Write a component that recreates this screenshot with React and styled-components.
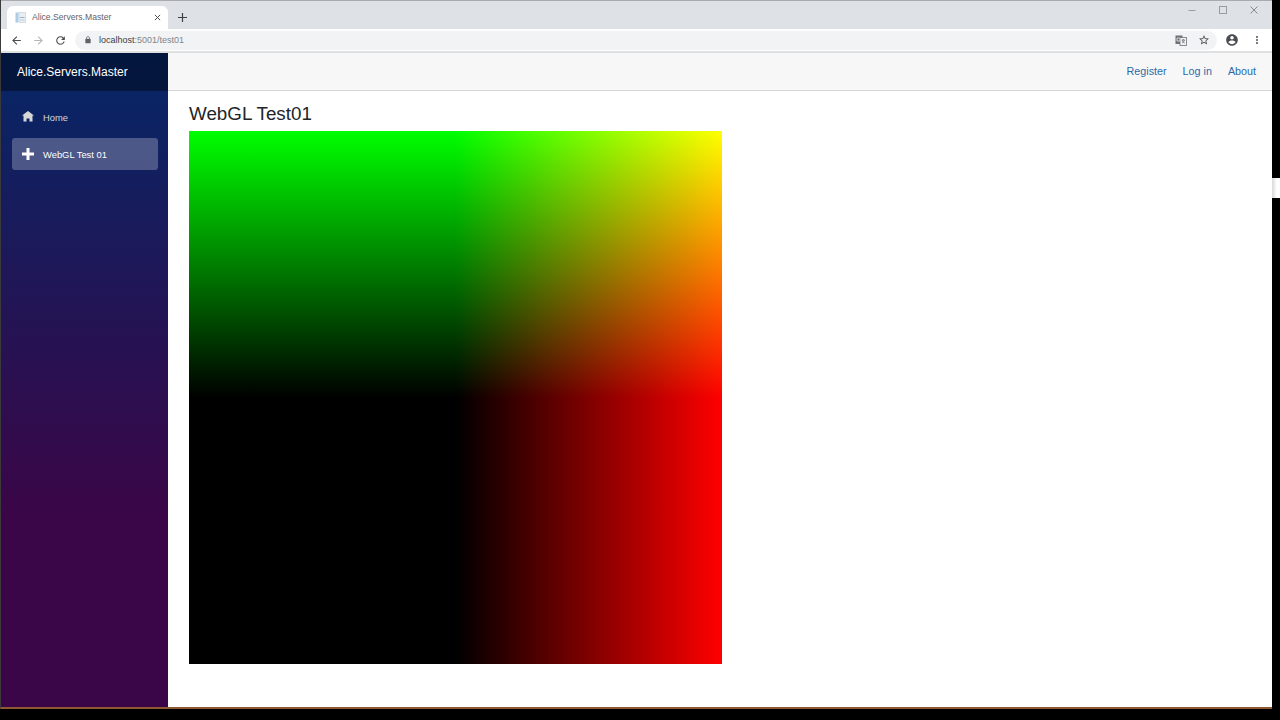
import React from "react";
import styled, { createGlobalStyle } from "styled-components";

const Global = createGlobalStyle`
  html, body { margin: 0; padding: 0; background: #000; }
  * { box-sizing: border-box; }
  body { font-family: "Liberation Sans", Arial, sans-serif; }
`;

const Screen = styled.div`
  width: 1280px; height: 720px; background: #000; display: flex; overflow: hidden;
`;
const Window = styled.div`
  width: 1272px; height: 709px; display: flex; flex-direction: column;
  border-left: 1px solid #3a3a3a; border-bottom: 2px solid #8f5a33; background: #fff;
`;
const Edge = styled.div`
  flex: 1; display: flex; flex-direction: column; padding-top: 178px;
`;
const EdgePatch = styled.div`
  height: 20px; background: linear-gradient(90deg, #d8d8d8, #fff 60%);
`;
const TabStrip = styled.div`
  height: 29px; flex: none; background: #dee1e6; border-top: 1px solid #a9abae;
  display: flex; align-items: flex-end; padding-left: 6px;
`;
const Tab = styled.div`
  width: 161px; height: 23px; background: #fff; border-radius: 6px 6px 0 0;
  display: flex; align-items: center; padding: 0 7px 1px 8px; gap: 6px;
`;
const TabTitle = styled.span`
  flex: 1; font-size: 8.6px; color: #5f6368; white-space: nowrap;
`;
const NewTab = styled.div`
  width: 28px; height: 23px; display: flex; align-items: center; justify-content: center; margin-right: auto;
`;
const WinControls = styled.div`
  align-self: flex-start; display: flex; gap: 21px; padding: 2px 13px 0 0; color: #85888c;
`;
const Toolbar = styled.div`
  height: 22px; flex: none; background: #fff; display: flex; align-items: center; padding: 0 9px 0 9px;
`;
const NavButtons = styled.div`
  display: flex; gap: 9px; align-items: center; margin-right: 8px;
`;
const Omnibox = styled.div`
  width: 1148px; height: 19px; border-radius: 10px; background: #f1f3f4;
  display: flex; align-items: center; padding: 0 7px 0 9px;
`;
const Url = styled.span`
  font-size: 9px; color: #80868b; margin-left: 7px; flex: 1;
`;
const Host = styled.span`color: #3c4043;`;
const OmniIcons = styled.div`display: flex; align-items: center; gap: 11px;`;
const ToolbarEnd = styled.div`
  display: flex; align-items: center; gap: 12px; margin-left: 8px;
`;
const ToolDivider = styled.div`
  height: 2px; flex: none; background: #dfe0e2;
`;
const Main = styled.div`
  flex: 1; display: flex; min-height: 0;
`;
const Sidebar = styled.aside`
  width: 167px; flex: none; display: flex; flex-direction: column;
  background: linear-gradient(180deg, #052767 0%, #3a0647 70%);
`;
const Brand = styled.div`
  height: 38px; flex: none; background: rgba(0, 0, 0, 0.4); color: #fff; font-size: 12px;
  display: flex; align-items: center; padding: 0 0 1px 16px;
`;
const NavList = styled.nav`
  display: flex; flex-direction: column; gap: 5px; padding: 10px 10px 0 11px;
`;
const NavItem = styled.div`
  height: 32px; border-radius: 3px; display: flex; align-items: center; padding-left: 10px; gap: 9px;
  font-size: 9.4px; color: ${p => (p.$active ? "#fff" : "#d7d7d7")};
  background: ${p => (p.$active ? "rgba(255,255,255,0.25)" : "transparent")};
`;
const Page = styled.div`flex: 1; display: flex; flex-direction: column; min-width: 0;`;
const TopBar = styled.header`
  height: 38px; flex: none; background: #f7f7f7; border-bottom: 1px solid #d6d5d5;
  display: flex; justify-content: flex-end; align-items: center; gap: 16px; padding: 0 16px 1px 0;
`;
const TopLink = styled.a`
  font-size: 10.75px; color: #2c6aa8; text-decoration: none;
`;
const Content = styled.main`
  padding: 12px 0 0 21px;
`;
const Title = styled.h1`
  margin: 0 0 6px; font-size: 18.8px; line-height: 22px; font-weight: 400; color: #212529;
`;
const Canvas = styled.div`
  width: 533px; height: 533px;
  background-image: linear-gradient(to right, #000 50%, #f00 100%), linear-gradient(to bottom, #0f0 0%, #000 50%);
  background-blend-mode: screen;
`;

const Mi = ({ d, size = 12, color = "#5f6368" }) => (
  <svg width={size} height={size} viewBox="0 0 24 24" fill={color}><path d={d} /></svg>
);
const Oi = ({ d, size = 12 }) => (
  <svg width={size} height={size} viewBox="0 0 8 8" fill="currentColor" style={{ flex: "none" }}><path d={d} /></svg>
);

const BACK = "M20 11H7.83l5.59-5.59L12 4l-8 8 8 8 1.41-1.41L7.83 13H20v-2z";
const FWD = "M12 4l-1.41 1.41L16.17 11H4v2h12.17l-5.58 5.59L12 20l8-8z";
const RELOAD = "M17.65 6.35A7.958 7.958 0 0 0 12 4c-4.42 0-7.99 3.58-7.99 8s3.57 8 7.99 8c3.73 0 6.84-2.55 7.73-6h-2.08A5.99 5.99 0 0 1 12 18c-3.31 0-6-2.69-6-6s2.69-6 6-6c1.66 0 3.14.69 4.22 1.78L13 11h7V4l-2.35 2.35z";
const LOCK = "M18 8h-1V6c0-2.76-2.24-5-5-5S7 3.24 7 6v2H6c-1.1 0-2 .9-2 2v10c0 1.1.9 2 2 2h12c1.1 0 2-.9 2-2V10c0-1.1-.9-2-2-2zM9 6c0-1.66 1.34-3 3-3s3 1.34 3 3v2H9V6z";
const STAR = "M22 9.24l-7.19-.62L12 2 9.19 8.63 2 9.24l5.46 4.73L5.82 21 12 17.27 18.18 21l-1.63-7.03L22 9.24zM12 15.4l-3.76 2.27 1-4.28-3.32-2.88 4.38-.38L12 6.1l1.71 4.04 4.38.38-3.32 2.88 1 4.28L12 15.4z";
const ACCOUNT = "M12 2C6.48 2 2 6.48 2 12s4.48 10 10 10 10-4.48 10-10S17.52 2 12 2zm0 3c1.66 0 3 1.34 3 3s-1.34 3-3 3-3-1.34-3-3 1.34-3 3-3zm0 14.2c-2.5 0-4.71-1.28-6-3.22.03-1.99 4-3.08 6-3.08 1.99 0 5.97 1.09 6 3.08-1.29 1.94-3.5 3.22-6 3.22z";
const DOTS = "M12 8a2 2 0 1 0 0-4 2 2 0 0 0 0 4zm0 2a2 2 0 1 0 0 4 2 2 0 0 0 0-4zm0 6a2 2 0 1 0 0 4 2 2 0 0 0 0-4z";
const HOME = "M4 0l-4 3h1v4h2v-2h2v2h2v-4.03l1 .03-4-3z";
const PLUS = "M3 0v3h-3v2h3v3h2v-3h3v-2h-3v-3h-2z";

const Favicon = () => (
  <svg width="11" height="11" viewBox="0 0 11 11">
    <rect x="0.5" y="0.5" width="3" height="10" fill="#a9cdea" />
    <rect x="4" y="0.5" width="6.5" height="10" fill="#e9eef3" stroke="#c4ccd4" strokeWidth="0.6" />
    <rect x="5" y="5" width="4.5" height="1" fill="#9fb4c8" />
    <rect x="5" y="7.5" width="4.5" height="1" fill="#c0cdd9" />
  </svg>
);
const Close = ({ size = 8, color = "#45494d", w = 1.1 }) => (
  <svg width={size} height={size} viewBox="0 0 8 8" stroke={color} strokeWidth={w} fill="none">
    <path d="M1 1l6 6M7 1l-6 6" />
  </svg>
);
const Translate = () => (
  <svg width="12" height="11" viewBox="0 0 12 11">
    <rect x="0.5" y="0.5" width="7" height="8.5" fill="#6d7175" />
    <rect x="5" y="2.5" width="6.5" height="8" fill="#f1f3f4" stroke="#6d7175" strokeWidth="0.8" />
    <path d="M2 3h3v3H2z" fill="none" stroke="#e8eaed" strokeWidth="0.8" />
    <path d="M6.8 5h3M8.3 4v1M7.2 5c.3 1.5 1.2 2.5 2.5 3M9.4 5c-.3 1.5-1.1 2.5-2.4 3" fill="none" stroke="#5f6368" strokeWidth="0.7" />
  </svg>
);

export default function App() {
  return (
    <Screen>
      <Global />
      <Window>
        <TabStrip>
          <Tab>
            <Favicon />
            <TabTitle>Alice.Servers.Master</TabTitle>
            <Close size={7} />
          </Tab>
          <NewTab>
            <svg width="9" height="9" viewBox="0 0 9 9" stroke="#3c4043" strokeWidth="1.2"><path d="M4.5 0v9M0 4.5h9" /></svg>
          </NewTab>
          <WinControls>
            <svg width="10" height="14" viewBox="0 0 10 14" stroke="#9a9da1"><path d="M1.5 7.5h7" /></svg>
            <svg width="10" height="14" viewBox="0 0 10 14" stroke="#9a9da1" fill="none"><rect x="1.5" y="3.5" width="7" height="7" /></svg>
            <svg width="10" height="14" viewBox="0 0 10 14" stroke="#85888c" fill="none"><path d="M1.5 3.5l7 7M8.5 3.5l-7 7" /></svg>
          </WinControls>
        </TabStrip>
        <Toolbar>
          <NavButtons>
            <Mi d={BACK} size={13} color="#494c50" />
            <Mi d={FWD} size={13} color="#b4b7ba" />
            <Mi d={RELOAD} size={13} color="#494c50" />
          </NavButtons>
          <Omnibox>
            <Mi d={LOCK} size={8} color="#5f6368" />
            <Url><Host>localhost</Host>:5001/test01</Url>
            <OmniIcons>
              <Translate />
              <Mi d={STAR} size={12} color="#4c5054" />
            </OmniIcons>
          </Omnibox>
          <ToolbarEnd>
            <Mi d={ACCOUNT} size={14} color="#4a4d51" />
            <Mi d={DOTS} size={12} color="#4a4d51" />
          </ToolbarEnd>
        </Toolbar>
        <ToolDivider />
        <Main>
          <Sidebar>
            <Brand>Alice.Servers.Master</Brand>
            <NavList>
              <NavItem><Oi d={HOME} />Home</NavItem>
              <NavItem $active><Oi d={PLUS} />WebGL Test 01</NavItem>
            </NavList>
          </Sidebar>
          <Page>
            <TopBar>
              <TopLink href="#">Register</TopLink>
              <TopLink href="#">Log in</TopLink>
              <TopLink href="#">About</TopLink>
            </TopBar>
            <Content>
              <Title>WebGL Test01</Title>
              <Canvas />
            </Content>
          </Page>
        </Main>
      </Window>
      <Edge><EdgePatch /></Edge>
    </Screen>
  );
}
